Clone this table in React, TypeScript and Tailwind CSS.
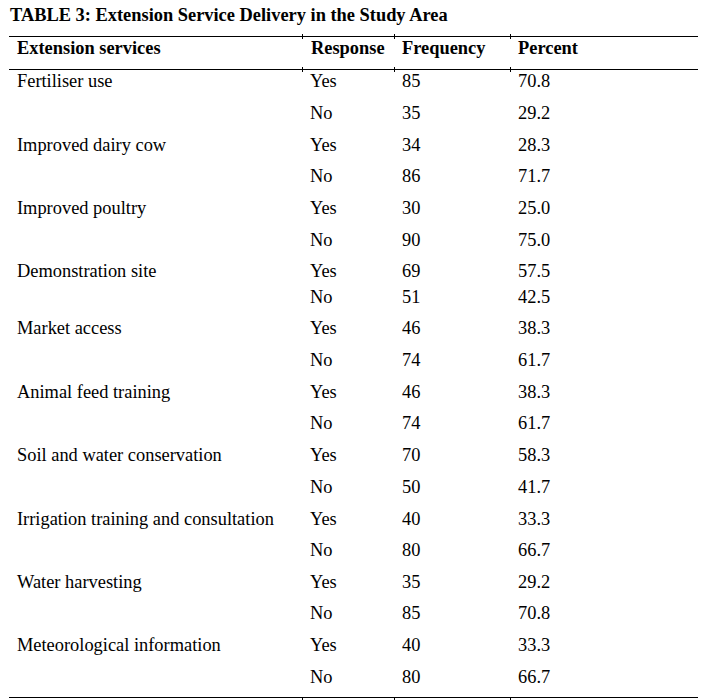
// Extension service delivery table, plain journal-style layout

type SubRow = { response: string; freq: number; pct: string; h: string };
type Service = { name: string; rows: [SubRow, SubRow] };

const services: Service[] = [
  { name: 'Fertiliser use', rows: [{ response: 'Yes', freq: 85, pct: '70.8', h: 'h-[32px]' }, { response: 'No', freq: 35, pct: '29.2', h: 'h-[32px]' }] },
  { name: 'Improved dairy cow', rows: [{ response: 'Yes', freq: 34, pct: '28.3', h: 'h-[31px]' }, { response: 'No', freq: 86, pct: '71.7', h: 'h-[32px]' }] },
  { name: 'Improved poultry', rows: [{ response: 'Yes', freq: 30, pct: '25.0', h: 'h-[32px]' }, { response: 'No', freq: 90, pct: '75.0', h: 'h-[31px]' }] },
  { name: 'Demonstration site', rows: [{ response: 'Yes', freq: 69, pct: '57.5', h: 'h-[26px]' }, { response: 'No', freq: 51, pct: '42.5', h: 'h-[31px]' }] },
  { name: 'Market access', rows: [{ response: 'Yes', freq: 46, pct: '38.3', h: 'h-[32px]' }, { response: 'No', freq: 74, pct: '61.7', h: 'h-[32px]' }] },
  { name: 'Animal feed training', rows: [{ response: 'Yes', freq: 46, pct: '38.3', h: 'h-[31px]' }, { response: 'No', freq: 74, pct: '61.7', h: 'h-[32px]' }] },
  { name: 'Soil and water conservation', rows: [{ response: 'Yes', freq: 70, pct: '58.3', h: 'h-[32px]' }, { response: 'No', freq: 50, pct: '41.7', h: 'h-[32px]' }] },
  { name: 'Irrigation training and consultation', rows: [{ response: 'Yes', freq: 40, pct: '33.3', h: 'h-[31px]' }, { response: 'No', freq: 80, pct: '66.7', h: 'h-[32px]' }] },
  { name: 'Water harvesting', rows: [{ response: 'Yes', freq: 35, pct: '29.2', h: 'h-[31px]' }, { response: 'No', freq: 85, pct: '70.8', h: 'h-[32px]' }] },
  { name: 'Meteorological information', rows: [{ response: 'Yes', freq: 40, pct: '33.3', h: 'h-[32px]' }, { response: 'No', freq: 80, pct: '66.7', h: 'h-[30px]' }] },
];

const cols = 'grid grid-cols-[293px_92px_116px_188px]';

// horizontal rule with the small column ticks the typesetter left behind
function Rule({ below = false }: { below?: boolean }) {
  return (
    <div className="relative h-px w-full bg-black">
      {[293, 385, 501].map((x) => (
        <span
          key={x}
          className={`absolute w-px bg-black ${below ? 'top-0 h-[4px]' : '-top-[2px] h-[5px]'}`}
          style={{ left: x }}
        />
      ))}
    </div>
  );
}

export default function App() {
  return (
    <div className="min-h-[700px] bg-white text-black font-['Liberation_Serif','Times_New_Roman',serif] text-[18.4px] leading-[20px]">
      <div className="pt-[5px] pl-[10px]">
        <h3 className="font-bold">TABLE 3: Extension Service Delivery in the Study Area</h3>
      </div>

      <div className="ml-[9px] mt-[11px] w-[689px]">
        <Rule />

        {/* header */}
        <div className={`${cols} h-[32px] pt-[1px] font-bold`}>
          <div className="pl-[8px]">Extension services</div>
          <div className="pl-[9px]">Response</div>
          <div className="pl-[8px]">Frequency</div>
          <div className="pl-[8px]">Percent</div>
        </div>

        <Rule />

        {/* body */}
        <div className="pt-[1px]">
          {services.map((s) =>
            s.rows.map((r, i) => (
              <div key={s.name + r.response} className={`${cols} ${r.h}`}>
                <div className="pl-[8px]">{i === 0 ? s.name : ''}</div>
                <div className="pl-[8px]">{r.response}</div>
                <div className="pl-[8px]">{r.freq}</div>
                <div className="pl-[8px]">{r.pct}</div>
              </div>
            ))
          )}
        </div>

        <Rule below />
      </div>
    </div>
  );
}
